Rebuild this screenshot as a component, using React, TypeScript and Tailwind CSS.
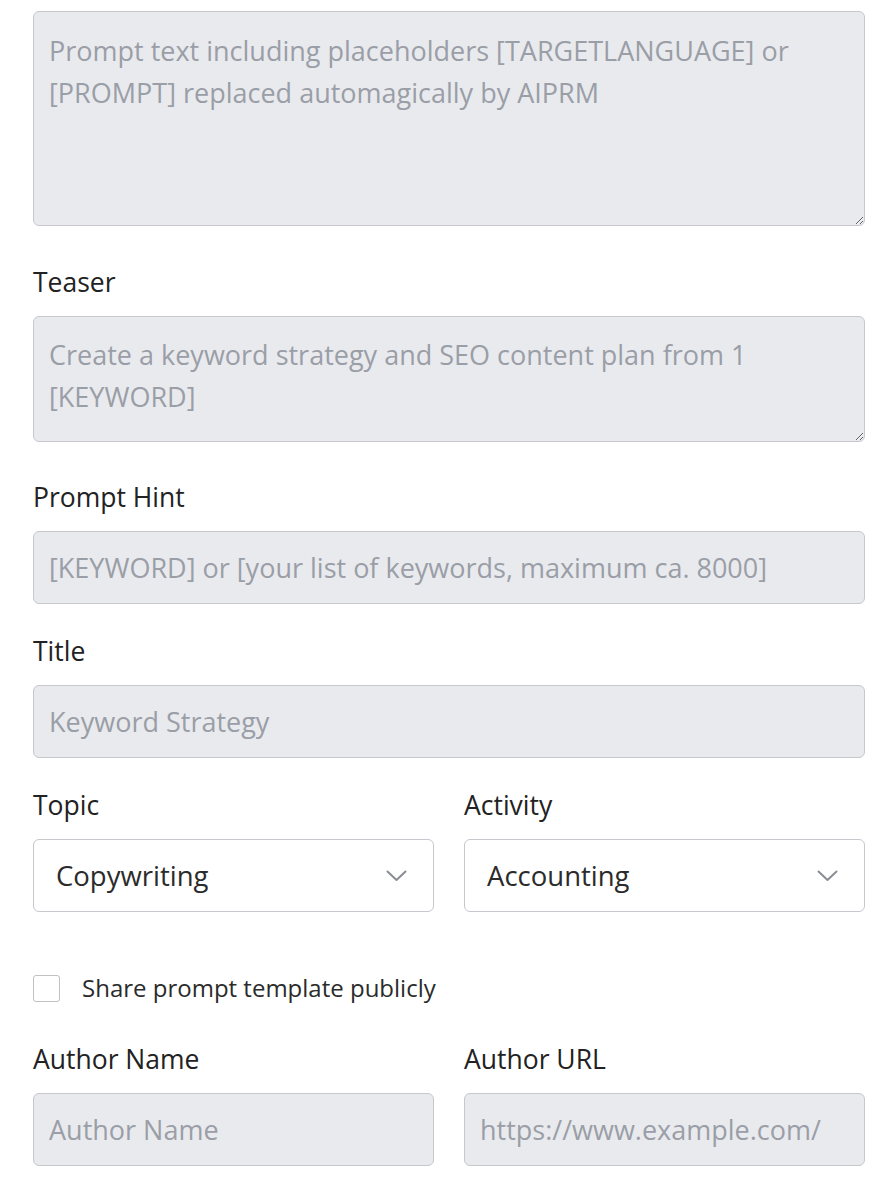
const font = { fontFamily: '"Open Sans", "Noto Sans", Arial, sans-serif' };

function Label({ children }: { children: React.ReactNode }) {
  return (
    <label className="block text-[26.5px] leading-[36px] text-[#222] mb-[16px]">
      {children}
    </label>
  );
}

const fieldBase =
  "block w-full rounded-[6px] border border-[#c6c8cd] bg-[#e9eaee] px-[15px] text-[27px] text-[#333] placeholder:text-[#9a9ea6] outline-none";

function Chevron() {
  return (
    <svg width="21" height="12" viewBox="0 0 21 12" fill="none">
      <path d="M1.5 1.5 L10.5 10 L19.5 1.5" stroke="#8a8d93" strokeWidth="2" strokeLinecap="round" strokeLinejoin="round" />
    </svg>
  );
}

function Select({ value }: { value: string }) {
  return (
    <div className="flex h-[73px] w-full items-center justify-between rounded-[6px] border border-[#c6c8cd] bg-white pl-[22px] pr-[26px]">
      <span className="text-[27.5px] text-[#2b2b2b]">{value}</span>
      <Chevron />
    </div>
  );
}

export default function App() {
  return (
    <div className="min-h-[1192px] w-[890px] bg-white pl-[33px] pr-[25px] pt-[11px]" style={font}>
      <textarea
        className={`${fieldBase} h-[215px] py-[18px] leading-[42px]`}
        placeholder="Prompt text including placeholders [TARGETLANGUAGE] or [PROMPT] replaced automagically by AIPRM"
      />

      <div className="mt-[38px]">
        <Label>Teaser</Label>
        <textarea
          className={`${fieldBase} h-[126px] py-[17px] leading-[42px]`}
          placeholder="Create a keyword strategy and SEO content plan from 1 [KEYWORD]"
        />
      </div>

      <div className="mt-[37px]">
        <Label>Prompt Hint</Label>
        <input
          className={`${fieldBase} h-[73px]`}
          placeholder="[KEYWORD] or [your list of keywords, maximum ca. 8000]"
        />
      </div>

      <div className="mt-[29px]">
        <Label>Title</Label>
        <input className={`${fieldBase} h-[73px]`} placeholder="Keyword Strategy" />
      </div>

      <div className="mt-[29px] grid grid-cols-2 gap-[30px]">
        <div>
          <Label>Topic</Label>
          <Select value="Copywriting" />
        </div>
        <div>
          <Label>Activity</Label>
          <Select value="Accounting" />
        </div>
      </div>

      <div className="mt-[58px] flex items-center gap-[22px]">
        <span className="block h-[27px] w-[27px] rounded-[3px] border border-[#bfc1c5] bg-white" />
        <span className="text-[24px] text-[#2b2b2b]">Share prompt template publicly</span>
      </div>

      <div className="mt-[35px] grid grid-cols-2 gap-[30px]">
        <div>
          <Label>Author Name</Label>
          <input className={`${fieldBase} h-[73px]`} placeholder="Author Name" />
        </div>
        <div>
          <Label>Author URL</Label>
          <input className={`${fieldBase} h-[73px]`} placeholder="https://www.example.com/" />
        </div>
      </div>
    </div>
  );
}
